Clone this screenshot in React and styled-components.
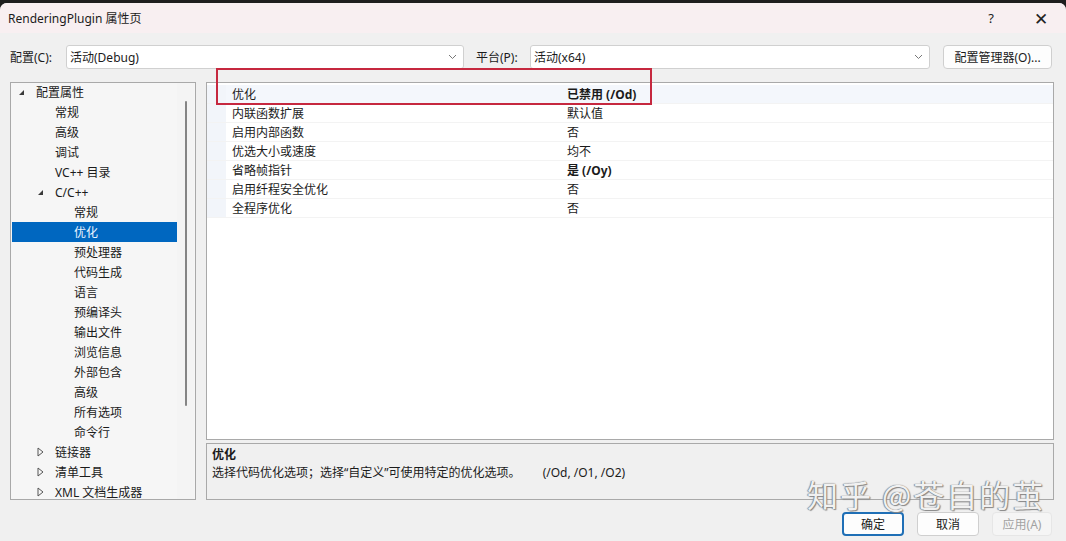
import React from 'react';
import styled, { createGlobalStyle } from 'styled-components';

const GlobalStyle = createGlobalStyle`
  html, body {
    margin: 0;
    padding: 0;
    background: #202020;
  }
  body {
    font-family: "Noto Sans", "Noto Sans CJK SC", sans-serif;
    font-size: 12px;
    color: #1b1b1b;
  }
`;

const Frame = styled.div`
  width: 1066px;
  height: 541px;
  padding-top: 3px;
  box-sizing: border-box;
  background: #1e1e1e;
  overflow: hidden;
`;

const Window = styled.div`
  position: relative;
  height: 538px;
  background: #f0f0f0;
  border-radius: 7px 7px 0 0;
  display: flex;
  flex-direction: column;
  overflow: hidden;
`;

const TitleBar = styled.div`
  height: 30px;
  flex: none;
  display: flex;
  align-items: center;
  padding-left: 8px;
  background: #f8eff1;
  font-size: 12px;
`;

const Title = styled.div`
  flex: 1;
`;

const TitleButton = styled.div`
  width: 50px;
  text-align: center;
  font-size: ${(p) => p.$size || 13}px;
  color: #222;
`;

const Content = styled.div`
  flex: 1;
  display: flex;
  flex-direction: column;
  padding: 12px 12px 0 10px;
  min-height: 0;
`;

const ConfigRow = styled.div`
  height: 24px;
  display: flex;
  align-items: center;
`;

const Label = styled.span`
  width: ${(p) => p.$w}px;
  flex: none;
`;

const Select = styled.div`
  width: ${(p) => p.$w}px;
  height: 24px;
  box-sizing: border-box;
  flex: none;
  display: flex;
  align-items: center;
  padding: 0 6px 0 3px;
  background: #fff;
  border: 1px solid #d0d0d0;
  border-radius: 3px;
  margin-right: ${(p) => p.$mr || 0}px;
`;

const SelectText = styled.span`
  flex: 1;
`;

const Button = styled.button`
  width: ${(p) => p.$w || 62}px;
  height: 24px;
  box-sizing: border-box;
  font-family: inherit;
  font-size: 12px;
  padding: 0;
  background: ${(p) => (p.$disabled ? '#f5f5f5' : '#fdfdfd')};
  color: ${(p) => (p.$disabled ? '#a2a2a2' : '#1b1b1b')};
  border: ${(p) =>
    p.$primary ? '2px solid #1f6fb6' : p.$disabled ? '1px solid #e6e6e6' : '1px solid #cfcfcf'};
  border-radius: 4px;
`;

const Panels = styled.div`
  display: flex;
  gap: 10px;
  margin-top: 13px;
  height: 418px;
`;

const TreePanel = styled.div`
  width: 186px;
  box-sizing: border-box;
  border: 1px solid #a9a9a9;
  background: #f6f6f6;
  display: flex;
  padding: 0 1px;
`;

const TreeList = styled.div`
  width: 165px;
  flex: none;
  margin-top: -1px;
`;

const TreeRow = styled.div`
  height: 20px;
  display: flex;
  align-items: center;
  padding-left: ${(p) => p.$level * 19}px;
  background: ${(p) => (p.$selected ? '#0067c0' : 'transparent')};
  color: ${(p) => (p.$selected ? '#eaf4ff' : '#1b1b1b')};
`;

const Expander = styled.span`
  width: 24px;
  flex: none;
  display: flex;
  align-items: center;
  padding-left: 6px;
  box-sizing: border-box;
`;

const ScrollTrack = styled.div`
  flex: 1;
  display: flex;
  justify-content: center;
  padding-top: 18px;
  background: #f4f4f4;
`;

const ScrollThumb = styled.div`
  width: 2px;
  height: 305px;
  background: #858585;
  border-radius: 1px;
`;

const RightColumn = styled.div`
  flex: 1;
  display: flex;
  flex-direction: column;
  gap: 3px;
`;

const Grid = styled.div`
  height: 358px;
  box-sizing: border-box;
  border: 1px solid #a9a9a9;
  background: #fff;
  padding-top: 2px;
`;

const GridRow = styled.div`
  height: 19px;
  box-sizing: border-box;
  display: flex;
  align-items: center;
  border-bottom: 1px solid #f3f3f3;
  background: ${(p) => (p.$active ? '#f4f7fc' : '#fff')};
`;

const Gutter = styled.div`
  width: 19px;
  align-self: stretch;
  background: #f2f5fa;
  flex: none;
`;

const Name = styled.div`
  width: 335px;
  padding-left: 6px;
  flex: none;
`;

const Value = styled.div`
  font-weight: ${(p) => (p.$bold ? 700 : 400)};
`;

const Description = styled.div`
  flex: 1;
  box-sizing: border-box;
  border: 1px solid #a9a9a9;
  background: #f0f0f0;
  padding: 2px 5px;
  line-height: 18px;
`;

const DescTitle = styled.div`
  font-weight: 700;
`;

const DescHint = styled.span`
  margin-left: 22px;
`;

const Footer = styled.div`
  display: flex;
  justify-content: flex-end;
  gap: 13px;
  margin-top: 12px;
  padding-right: 2px;
`;

/* red annotation frame drawn over the grid header */
const Highlight = styled.div`
  position: absolute;
  left: 216px;
  top: 65px;
  width: 436px;
  height: 37px;
  box-sizing: border-box;
  border: 2px solid #c6283f;
  pointer-events: none;
`;

const Watermark = styled.div`
  position: absolute;
  left: 807px;
  top: 468px;
  font-family: "Noto Sans CJK SC", sans-serif;
  font-size: 31px;
  letter-spacing: 2px;
  color: rgba(255, 255, 255, 0.92);
  text-shadow: 0 0 1px #6a6a6a, 1px 1px 1px #8a8a8a, -1px 0 1px #9a9a9a;
  pointer-events: none;
`;

const Chevron = () => (
  <svg width="9" height="6" viewBox="0 0 9 6">
    <path d="M1 1l3.5 3.5L8 1" fill="none" stroke="#777" strokeWidth="1" />
  </svg>
);

const OpenTri = () => (
  <svg width="7" height="7" viewBox="0 0 7 7">
    <path d="M6 1v5H1z" fill="#3a3a3a" />
  </svg>
);

const ClosedTri = () => (
  <svg width="7" height="10" viewBox="0 0 7 10">
    <path d="M1 1l5 4-5 4z" fill="none" stroke="#555" strokeWidth="1" />
  </svg>
);

const tree = [
  { label: '配置属性', level: 0, exp: 'open' },
  { label: '常规', level: 1 },
  { label: '高级', level: 1 },
  { label: '调试', level: 1 },
  { label: 'VC++ 目录', level: 1 },
  { label: 'C/C++', level: 1, exp: 'open' },
  { label: '常规', level: 2 },
  { label: '优化', level: 2, selected: true },
  { label: '预处理器', level: 2 },
  { label: '代码生成', level: 2 },
  { label: '语言', level: 2 },
  { label: '预编译头', level: 2 },
  { label: '输出文件', level: 2 },
  { label: '浏览信息', level: 2 },
  { label: '外部包含', level: 2 },
  { label: '高级', level: 2 },
  { label: '所有选项', level: 2 },
  { label: '命令行', level: 2 },
  { label: '链接器', level: 1, exp: 'closed' },
  { label: '清单工具', level: 1, exp: 'closed' },
  { label: 'XML 文档生成器', level: 1, exp: 'closed' },
];

const props = [
  { name: '优化', value: '已禁用 (/Od)', bold: true, active: true },
  { name: '内联函数扩展', value: '默认值' },
  { name: '启用内部函数', value: '否' },
  { name: '优选大小或速度', value: '均不' },
  { name: '省略帧指针', value: '是 (/Oy)', bold: true },
  { name: '启用纤程安全优化', value: '否' },
  { name: '全程序优化', value: '否' },
];

const App = () => {
  return (
    <>
      <GlobalStyle />
      <Frame>
        <Window>
          <TitleBar>
            <Title>RenderingPlugin 属性页</Title>
            <TitleButton>?</TitleButton>
            <TitleButton $size={17}>✕</TitleButton>
          </TitleBar>
          <Content>
            <ConfigRow>
              <Label $w={56}>配置(C):</Label>
              <Select $w={398} $mr={12}>
                <SelectText>活动(Debug)</SelectText>
                <Chevron />
              </Select>
              <Label $w={54}>平台(P):</Label>
              <Select $w={400} $mr={13}>
                <SelectText>活动(x64)</SelectText>
                <Chevron />
              </Select>
              <Button $w={109}>配置管理器(O)...</Button>
            </ConfigRow>
            <Panels>
              <TreePanel>
                <TreeList>
                  {tree.map((t, i) => (
                    <TreeRow key={i} $level={t.level} $selected={t.selected}>
                      <Expander>
                        {t.exp === 'open' && <OpenTri />}
                        {t.exp === 'closed' && <ClosedTri />}
                      </Expander>
                      {t.label}
                    </TreeRow>
                  ))}
                </TreeList>
                <ScrollTrack>
                  <ScrollThumb />
                </ScrollTrack>
              </TreePanel>
              <RightColumn>
                <Grid>
                  {props.map((p) => (
                    <GridRow key={p.name} $active={p.active}>
                      <Gutter />
                      <Name>{p.name}</Name>
                      <Value $bold={p.bold}>{p.value}</Value>
                    </GridRow>
                  ))}
                </Grid>
                <Description>
                  <DescTitle>优化</DescTitle>
                  <div>
                    选择代码优化选项；选择“自定义”可使用特定的优化选项。
                    <DescHint>(/Od, /O1, /O2)</DescHint>
                  </div>
                </Description>
              </RightColumn>
            </Panels>
            <Footer>
              <Button $primary>确定</Button>
              <Button>取消</Button>
              <Button $disabled $w={60}>应用(A)</Button>
            </Footer>
          </Content>
          <Highlight />
          <Watermark>知乎 @苍自的茧</Watermark>
        </Window>
      </Frame>
    </>
  );
};

export default App;
